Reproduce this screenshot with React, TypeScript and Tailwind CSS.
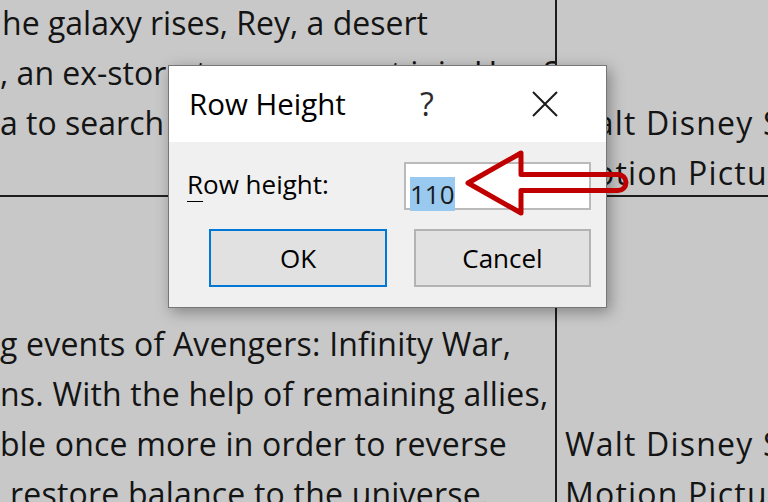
import React from "react";

const sheetFont = { fontFamily: '"Open Sans", "Noto Sans", sans-serif' };

function Line({ children, className = "" }: { children: React.ReactNode; className?: string }) {
  return <div className={`h-[50px] whitespace-nowrap leading-[50px] ${className}`}>{children}</div>;
}

function RowHeightDialog() {
  return (
    <div className="absolute left-[168px] top-[65px] flex h-[243px] w-[439px] flex-col border border-[#767676] bg-[#f0f0f0] text-black shadow-[3px_4px_14px_rgba(0,0,0,0.35)]">
      <div className="flex h-[76px] items-center bg-white pl-[20px] pr-[26px]">
        <div className="flex-1 text-[29.5px] leading-[40px]">Row Height</div>
        <div className="flex w-[46px] justify-center text-[32px] leading-[40px] text-[#2b2b2b]">?</div>
        <div className="w-[60px]" />
        <div className="flex w-[70px] justify-center">
          <svg width="26" height="26" viewBox="0 0 26 26" fill="none" stroke="#1a1a1a" strokeWidth={2}>
            <path d="M1 1L25 25M25 1L1 25" />
          </svg>
        </div>
      </div>
      <div className="flex flex-col pl-[18px] pr-[15px] pt-[20px]">
        <div className="flex items-center justify-between">
          <div className="pb-[4px] text-[26px] leading-[34px]">
            <span className="underline decoration-1 underline-offset-[7px]">R</span>ow height:
          </div>
          <div className="h-[48px] w-[187px] border-2 border-[#bababa] bg-white pl-[4px] pt-[4px]">
            <span className="inline-block h-[34px] bg-[#99c9ef] text-[26px] leading-[34px] text-[#1a1a1a]">110</span>
          </div>
        </div>
        <div className="mt-[19px] flex justify-end gap-[27px]">
          <button className="flex h-[58px] w-[178px] items-center justify-center border-2 border-[#0078d7] bg-[#e1e1e1] text-[26px] leading-[34px]">
            OK
          </button>
          <button className="flex h-[58px] w-[177px] items-center justify-center border-2 border-[#b3b3b3] bg-[#e1e1e1] text-[26px] leading-[34px]">
            Cancel
          </button>
        </div>
      </div>
    </div>
  );
}

export default function App() {
  return (
    <div
      className="relative h-[502px] w-[768px] overflow-hidden bg-[#c8c8c8] text-[32px] text-[#141414]"
      style={sheetFont}
    >
      <div className="grid h-full grid-cols-[557px_1fr] grid-rows-[197px_1fr]">
        <div className="overflow-hidden border-b-2 border-r-2 border-[#1e1e1e]">
          <div className="-mt-[2px]">
            <Line className="pl-[2px]">he galaxy rises, Rey, a desert</Line>
            <Line>, an ex-stormtrooper, must join Han Solo</Line>
            <Line>a to search for the one hope of</Line>
          </div>
        </div>
        <div className="overflow-hidden border-b-2 border-[#1e1e1e] pl-[8px] pt-[98px] tracking-[1.2px]">
          <Line>Walt Disney Studios</Line>
          <Line>Motion Pictures</Line>
        </div>
        <div className="overflow-hidden border-r-2 border-[#1e1e1e] pt-[122px] tracking-[0.2px]">
          <Line>g events of Avengers: Infinity War,</Line>
          <Line>ns. With the help of remaining allies,</Line>
          <Line>ble once more in order to reverse</Line>
          <Line className="pl-[10px]">restore balance to the universe.</Line>
        </div>
        <div className="overflow-hidden pl-[8px] pt-[222px] tracking-[1.2px]">
          <Line>Walt Disney Studios</Line>
          <Line>Motion Pictures</Line>
        </div>
      </div>

      <RowHeightDialog />

      <svg className="pointer-events-none absolute left-0 top-0" width="768" height="502" viewBox="0 0 768 502">
        <path
          d="M468 183 L521 153 L521 174.5 L618 174.5 A8 8 0 0 1 618 190.5 L521 190.5 L521 213 Z"
          fill="none"
          stroke="#c00000"
          strokeWidth={5}
          strokeLinejoin="round"
        />
      </svg>
    </div>
  );
}
